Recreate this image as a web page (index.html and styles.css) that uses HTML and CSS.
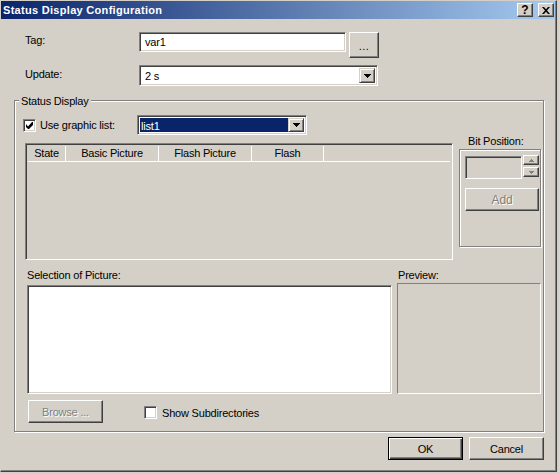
FILE: index.html
```html
<!DOCTYPE html>
<html>
<head>
<meta charset="utf-8">
<link rel="stylesheet" href="styles.css">
</head>
<body>
<div class="dialog">
  <div class="titlebar">
    <span class="title">Status Display Configuration</span>
    <div class="tb-btns">
      <span class="tb-btn help">?</span>
      <span class="tb-btn close"><svg width="8" height="7" viewBox="0 0 8 7"><path d="M0 0h2l2 2.2L6 0h2L5 3.5 8 7H6L4 4.8 2 7H0l3-3.5z" fill="#000"/></svg></span>
    </div>
  </div>

  <div class="row row-tag">
    <span class="lbl">Tag:</span>
    <div class="sunken field tag-field">var1</div>
    <button class="btn ellipsis">...</button>
  </div>

  <div class="row row-update">
    <span class="lbl">Update:</span>
    <div class="sunken combo update-combo">
      <span class="combo-text">2 s</span>
      <span class="combo-btn"><svg width="7" height="4" viewBox="0 0 7 4"><path d="M0 0h7v1h-1v1h-1v1h-1v1h-1v-1h-1v-1h-1v-1h-1z" fill="#000"/></svg></span>
    </div>
  </div>

  <div class="group">
    <div class="group-title">Status Display</div>

    <div class="list-row">
      <label class="cb-label">
        <span class="checkbox sunken"><svg width="7" height="7" viewBox="0 0 7 7"><path d="M6 0h1v3L3 7H2L0 5V2l2 2.5z" fill="#000"/></svg></span>
        <span>Use graphic list:</span>
      </label>
      <div class="sunken combo list-combo">
        <span class="combo-text selected">list1</span>
        <span class="combo-btn"><svg width="7" height="4" viewBox="0 0 7 4"><path d="M0 0h7v1h-1v1h-1v1h-1v1h-1v-1h-1v-1h-1v-1h-1z" fill="#000"/></svg></span>
      </div>
    </div>

    <div class="mid-row">
      <div class="sunken listview">
        <div class="lv-head">
          <span class="lv-col c-state">State</span>
          <span class="lv-col c-basic">Basic Picture</span>
          <span class="lv-col c-flashpic">Flash Picture</span>
          <span class="lv-col c-flash">Flash</span>
          <span class="lv-fill"></span>
        </div>
      </div>

      <div class="bit-col">
        <div class="bit-label">Bit Position:</div>
        <div class="etched bit-box">
          <div class="spin-row">
            <div class="sunken spin-field"></div>
            <div class="spin-btns">
              <span class="btn spin-btn"><svg width="5" height="3" viewBox="0 0 5 3"><path d="M2 0h1v1h1v1h1v1H0V2h1V1h1z" fill="#808080"/></svg></span>
              <span class="btn spin-btn"><svg width="5" height="3" viewBox="0 0 5 3"><path d="M0 0h5v1H4v1H3v1H2V2H1V1H0z" fill="#808080"/></svg></span>
            </div>
          </div>
          <button class="btn add-btn disabled">Add</button>
        </div>
      </div>
    </div>

    <div class="labels-row">
      <span class="sel-label">Selection of Picture:</span>
      <span class="prev-label">Preview:</span>
    </div>

    <div class="pics-row">
      <div class="sunken pic-list"></div>
      <div class="preview"></div>
    </div>

    <div class="browse-row">
      <button class="btn browse-btn disabled">Browse ...</button>
      <label class="cb-label2">
        <span class="checkbox sunken"></span>
        <span>Show Subdirectories</span>
      </label>
    </div>
  </div>

  <div class="footer">
    <button class="btn default ok-btn">OK</button>
    <button class="btn cancel-btn">Cancel</button>
  </div>
</div>
</body>
</html>
```

FILE: styles.css
```css
html, body {
  margin: 0;
  padding: 0;
  background: #d4d0c8;
}

body {
  font-family: "Liberation Sans", Arial, sans-serif;
  font-size: 11px;
  letter-spacing: -0.2px;
  color: #000;
}

.dialog {
  box-sizing: border-box;
  width: 557px;
  height: 472px;
  background: #d4d0c8;
  border: 1px solid;
  border-color: #d4d0c8 #404040 #404040 #d4d0c8;
  box-shadow: inset -1px -1px #808080;
}

/* title bar */
.titlebar {
  height: 18px;
  margin-right: 1px;
  display: flex;
  align-items: center;
  justify-content: space-between;
  padding: 0 1px 0 2px;
  background: linear-gradient(to right, #0a246a, #a6caf0);
}

.title {
  color: #fff;
  font-weight: bold;
  font-size: 11px;
  letter-spacing: 0.3px;
  line-height: 13px;
}

.tb-btns {
  display: flex;
  gap: 5px;
}

.tb-btn {
  box-sizing: border-box;
  width: 16px;
  height: 14px;
  display: flex;
  align-items: center;
  justify-content: center;
  background: #d4d0c8;
  border: 1px solid;
  border-color: #fff #404040 #404040 #fff;
  box-shadow: inset -1px -1px #808080;
  font-weight: bold;
  font-size: 12px;
  line-height: 12px;
  letter-spacing: 0;
}

/* generic controls */
.sunken {
  box-sizing: border-box;
  border: 1px solid;
  border-color: #808080 #fff #fff #808080;
  box-shadow: inset 1px 1px #404040, inset -1px -1px #d4d0c8;
}

.btn {
  box-sizing: border-box;
  background: #d4d0c8;
  border: 1px solid;
  border-color: #fff #404040 #404040 #fff;
  box-shadow: inset -1px -1px #808080;
  font-family: "Liberation Sans", Arial, sans-serif;
  font-size: 11px;
  letter-spacing: -0.2px;
  color: #000;
  padding: 0;
  margin: 0;
  display: flex;
  align-items: center;
  justify-content: center;
}

.btn.default {
  border: 1px solid #000;
  box-shadow: inset 1px 1px #fff, inset -1px -1px #404040, inset -2px -2px #808080;
}

.disabled {
  color: #808080;
  text-shadow: 1px 1px #fff;
}

.etched {
  box-sizing: border-box;
  border: 1px solid #808080;
  box-shadow: inset 1px 1px #fff, 1px 1px #fff;
}

/* top rows */
.row {
  display: flex;
  align-items: flex-start;
  padding-left: 24px;
}

.row-tag {
  margin-top: 13px;
}

.row-update {
  margin-top: 7px;
}

.lbl {
  width: 114px;
  line-height: 13px;
  margin-top: 2px;
}

.row-update .lbl {
  margin-top: 3px;
}

.field {
  background: #fff;
  height: 20px;
  line-height: 18px;
  padding-left: 5px;
}

.tag-field {
  width: 207px;
  margin-right: 3px;
}

.ellipsis {
  width: 30px;
  height: 26px;
  padding-top: 2px;
  letter-spacing: 0.5px;
}

.combo {
  display: flex;
  align-items: stretch;
  background: #fff;
  padding: 2px;
}

.combo-text {
  flex: 1;
  line-height: 16px;
}

.update-combo {
  width: 239px;
  height: 21px;
}

.update-combo .combo-text {
  padding-left: 3px;
  line-height: 17px;
}

.combo-btn {
  box-sizing: border-box;
  width: 16px;
  background: #d4d0c8;
  border: 1px solid;
  border-color: #d4d0c8 #404040 #404040 #d4d0c8;
  box-shadow: inset 1px 1px #fff, inset -1px -1px #808080;
  display: flex;
  align-items: center;
  justify-content: center;
}

/* group */
.group {
  box-sizing: border-box;
  margin: 14px 0 0 13px;
  width: 530px;
  height: 332px;
  border: 1px solid #808080;
  box-shadow: inset 1px 1px #fff, 1px 1px #fff;
}

.group-title {
  width: fit-content;
  margin: -6px 0 0 4px;
  padding: 0 2px;
  line-height: 13px;
  background: #d4d0c8;
}

.list-row {
  display: flex;
  align-items: center;
  margin: 7px 0 0 8px;
}

.cb-label {
  width: 114px;
  display: flex;
  align-items: center;
  gap: 4px;
}

.checkbox {
  width: 13px;
  height: 13px;
  background: #fff;
  display: flex;
  align-items: center;
  justify-content: center;
}

.list-combo {
  width: 170px;
  height: 20px;
  background: #fff;
}

.combo-text.selected {
  background: #0a246a;
  color: #fff;
  padding-left: 1px;
}

/* list view + bit position */
.mid-row {
  display: flex;
  align-items: flex-start;
}

.listview {
  width: 428px;
  height: 117px;
  margin: 8px 0 0 10px;
  padding: 2px;
  background: #d4d0c8;
}

.lv-head {
  display: flex;
  height: 16px;
}

.lv-col {
  box-sizing: border-box;
  height: 16px;
  line-height: 15px;
  text-align: center;
  border-right: 1px solid #fff;
  border-bottom: 1px solid #fff;
}

.c-state { width: 38px; }
.c-basic { width: 93px; }
.c-flashpic { width: 93px; }
.c-flash { width: 72px; }

.lv-fill {
  flex: 1;
  box-sizing: border-box;
  border-bottom: 1px solid #fff;
}

.bit-col {
  margin-left: 6px;
  width: 82px;
}

.bit-label {
  line-height: 13px;
  margin-left: 9px;
}

.bit-box {
  margin-top: 1px;
  height: 98px;
  padding: 6px 0 0 5px;
}

.spin-row {
  display: flex;
  align-items: flex-start;
}

.spin-field {
  width: 57px;
  height: 23px;
  background: #d4d0c8;
}

.spin-btns {
  margin: -1px 0 0 1px;
  display: flex;
  flex-direction: column;
  gap: 2px;
}

.spin-btn {
  width: 16px;
  height: 10px;
}

.add-btn {
  margin-top: 9px;
  width: 74px;
  height: 23px;
  font-size: 12px;
}

/* picture selection */
.labels-row {
  display: flex;
  margin: 9px 0 0 12px;
  line-height: 13px;
}

.sel-label {
  width: 371px;
}

.pics-row {
  display: flex;
  align-items: flex-start;
  margin-left: 12px;
}

.pic-list {
  width: 365px;
  height: 109px;
  margin-top: 3px;
  background: #fff;
}

.preview {
  box-sizing: border-box;
  width: 144px;
  height: 111px;
  margin: 1px 0 0 5px;
  border: 1px solid;
  border-color: #808080 #fff #fff #808080;
}

.browse-row {
  display: flex;
  align-items: center;
  margin: 6px 0 0 13px;
}

.browse-btn {
  width: 75px;
  height: 23px;
}

.cb-label2 {
  margin-left: 41px;
  display: flex;
  align-items: center;
  gap: 5px;
  padding-top: 2px;
}

/* footer */
.footer {
  display: flex;
  gap: 6px;
  margin: 5px 0 0 387px;
}

.ok-btn, .cancel-btn {
  width: 75px;
  height: 23px;
}
```
